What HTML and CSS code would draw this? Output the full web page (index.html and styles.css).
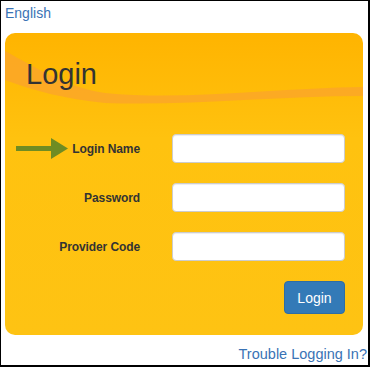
FILE: index.html
```html
<!DOCTYPE html>
<html>
<head>
<meta charset="utf-8">
<link rel="stylesheet" href="styles.css">
</head>
<body>
<div class="frame">
  <a class="lang" href="#">English</a>
  <div class="card">
    <svg class="wave" width="358" height="302" viewBox="0 0 358 302" preserveAspectRatio="none">
      <defs>
        <linearGradient id="bg" x1="0" y1="0" x2="0" y2="1">
          <stop offset="0" stop-color="#ffb400"/>
          <stop offset="0.35" stop-color="#ffc20f"/>
          <stop offset="1" stop-color="#fec313"/>
        </linearGradient>
      </defs>
      <rect width="358" height="302" fill="url(#bg)"/>
      <path d="M0,18 C30,34 60,54 100,60 C180,68 270,55 358,54 L358,63 C270,63 180,73 100,70 C60,66 30,58 0,47 Z" fill="#fba52a" opacity="0.8"/>
    </svg>
    <h1 class="title">Login</h1>
    <form class="form">
      <div class="row">
        <label class="label">
          <svg class="arrow" width="52" height="21" viewBox="0 0 52 21"><rect x="0" y="8" width="36" height="5" fill="#6f8c23"/><polygon points="35,0 52,10.5 35,21" fill="#6f8c23"/></svg>
          Login Name</label>
        <input class="input" type="text">
      </div>
      <div class="row">
        <label class="label">Password</label>
        <input class="input" type="password">
      </div>
      <div class="row">
        <label class="label">Provider Code</label>
        <input class="input" type="text">
      </div>
      <div class="actions">
        <button class="btn" type="button">Login</button>
      </div>
    </form>
  </div>
  <div class="footer"><a class="trouble" href="#">Trouble Logging In?</a></div>
</div>
</body>
</html>
```
FILE: styles.css
```css
html, body {
  margin: 0;
  padding: 0;
  background: #fff;
}
.frame {
  box-sizing: border-box;
  width: 370px;
  height: 367px;
  border-left: 1px solid #000;
  border-top: 1px solid #000;
  border-right: 2px solid #000;
  border-bottom: 2px solid #000;
  font-family: "Liberation Sans", Arial, sans-serif;
  display: flex;
  flex-direction: column;
}
.lang {
  display: block;
  margin: 4px 0 0 4px;
  font-size: 14px;
  line-height: 16px;
  color: #3a73b5;
  text-decoration: none;
}
.card {
  position: relative;
  overflow: hidden;
  margin: 12px 0 0 4px;
  width: 358px;
  height: 302px;
  box-sizing: border-box;
  border-radius: 10px;
  padding: 0 18px 0 0;
}
.wave {
  position: absolute;
  left: 0;
  top: 0;
  z-index: 0;
}
.title {
  position: relative;
  margin: 24px 0 0 21px;
  font-size: 29px;
  line-height: 34px;
  font-weight: normal;
  color: #333;
}
.form {
  position: relative;
  margin-top: 43px;
  display: flex;
  flex-direction: column;
  gap: 20px;
}
.row {
  display: grid;
  grid-template-columns: 135px 173px;
  column-gap: 32px;
  align-items: center;
  height: 29px;
}
.label {
  display: flex;
  align-items: center;
  justify-content: flex-end;
  font-size: 12px;
  font-weight: bold;
  color: #333;
  letter-spacing: -0.1px;
}
.arrow {
  margin-right: 4px;
}
.input {
  box-sizing: border-box;
  width: 173px;
  height: 29px;
  border: 1px solid #ccc;
  border-radius: 4px;
  background: #fff;
  box-shadow: inset 0 1px 1px rgba(0,0,0,0.075);
  margin: 0;
}
.actions {
  display: flex;
  justify-content: flex-end;
}
.btn {
  width: 61px;
  height: 33px;
  background: #337ab7;
  border: 1px solid #2e6da4;
  border-radius: 4px;
  color: #fff;
  font-family: "Liberation Sans", Arial, sans-serif;
  font-size: 14px;
  padding: 0;
}
.footer {
  display: flex;
  justify-content: flex-end;
  margin-top: 11px;
}
.trouble {
  font-size: 14.5px;
  line-height: 16px;
  color: #3a73b5;
  text-decoration: none;
  margin-right: 1px;
}
```
